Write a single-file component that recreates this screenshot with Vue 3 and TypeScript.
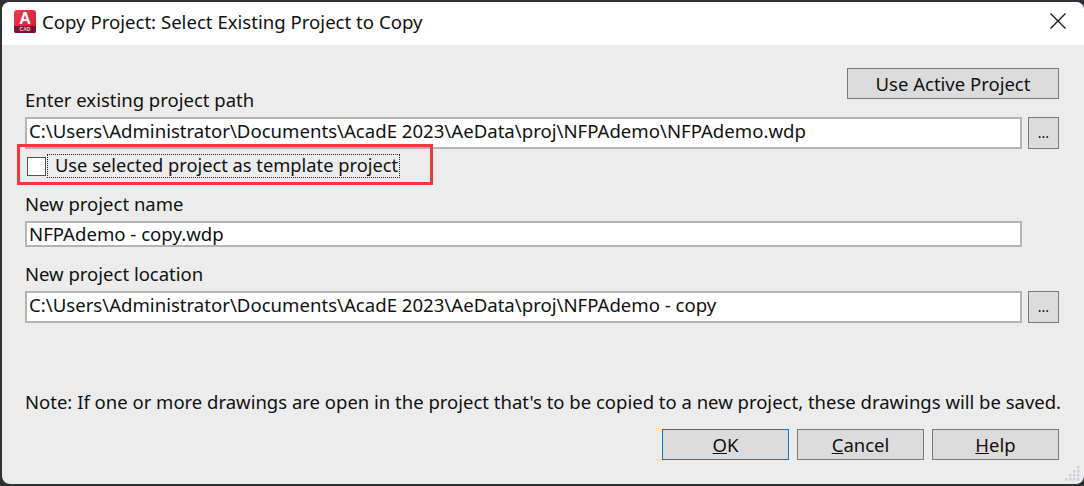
<script setup lang="ts">
const projectPath = 'C:\\Users\\Administrator\\Documents\\AcadE 2023\\AeData\\proj\\NFPAdemo\\NFPAdemo.wdp'
const locationPath = 'C:\\Users\\Administrator\\Documents\\AcadE 2023\\AeData\\proj\\NFPAdemo - copy'

// resize grip: staircase of dots, widest on the bottom row
const gripDots: { x: number; y: number }[] = []
for (let row = 0; row < 4; row++) {
  for (let col = 3 - row; col < 4; col++) {
    gripDots.push({ x: col * 4 + 1, y: row * 4 + 1 })
  }
}
</script>

<template>
  <div class="window">
    <div class="titlebar">
      <div class="app-icon">
        <span class="app-letter">A</span>
        <span class="app-band">CAD</span>
      </div>
      <div class="title">Copy Project: Select Existing Project to Copy</div>
      <svg class="close" width="16" height="16" viewBox="0 0 16 16">
        <path d="M0.5 0.5 L15.5 15.5 M15.5 0.5 L0.5 15.5" stroke="#111" stroke-width="1.2" fill="none" />
      </svg>
    </div>

    <div class="body">
      <div class="top-actions">
        <button class="btn btn-active">Use Active Project</button>
      </div>
      <div class="label first-label">Enter existing project path</div>
      <div class="field-row">
        <div class="input tall">{{ projectPath }}</div>
        <button class="btn btn-browse"><span>...</span></button>
      </div>

      <div class="check-row">
        <span class="checkbox"></span>
        <span class="check-label">Use selected project as template project</span>
        <div class="highlight"></div>
      </div>

      <div class="label name-label">New project name</div>
      <div class="field-row">
        <div class="input short">NFPAdemo - copy.wdp</div>
      </div>

      <div class="label location-label">New project location</div>
      <div class="field-row">
        <div class="input tall">{{ locationPath }}</div>
        <button class="btn btn-browse"><span>...</span></button>
      </div>

      <div class="note">Note: If one or more drawings are open in the project that's to be copied to a new project, these drawings will be saved.</div>

      <div class="footer">
        <button class="btn btn-footer btn-default"><u>O</u>K</button>
        <button class="btn btn-footer"><u>C</u>ancel</button>
        <button class="btn btn-footer"><u>H</u>elp</button>
      </div>

      <svg class="grip" width="18" height="18" viewBox="0 0 18 18">
        <rect v-for="(dot, i) in gripDots" :key="i" :x="dot.x" :y="dot.y" width="2.5" height="2.5" fill="#ccd0d8" />
      </svg>
    </div>
  </div>
</template>

<style>
html,
body {
  margin: 0;
  background: #2e3238;
}
</style>

<style scoped>
.window {
  box-sizing: border-box;
  width: 1082px;
  height: 482px;
  margin: 2px 0 0 2px;
  border-radius: 8px;
  overflow: hidden;
  display: flex;
  flex-direction: column;
  background: #ececec;
  font-family: "Noto Sans", "Open Sans", sans-serif;
  font-size: 18.5px;
  color: #111;
}
.titlebar {
  box-sizing: border-box;
  height: 43px;
  flex-shrink: 0;
  background: #fff;
  display: flex;
  align-items: center;
  padding: 0 18px 5px 12px;
}
.app-icon {
  width: 22px;
  height: 23px;
  border-radius: 3px 3px 2px 2px;
  background: linear-gradient(135deg, #ef3a50, #d3183a);
  position: relative;
  overflow: hidden;
  flex-shrink: 0;
}
.app-letter {
  position: absolute;
  left: 0;
  right: 0;
  top: 0;
  text-align: center;
  color: #fff;
  font-family: "Liberation Sans", sans-serif;
  font-size: 16px;
  font-weight: 700;
  line-height: 17px;
}
.app-band {
  position: absolute;
  left: 0;
  right: 0;
  bottom: 0;
  height: 7px;
  background: #7c1430;
  color: #f3ccd3;
  text-align: center;
  font-family: "Liberation Sans", sans-serif;
  font-size: 5px;
  font-weight: 700;
  line-height: 7px;
}
.title {
  flex: 1;
  margin-left: 6px;
  font-size: 18.6px;
  white-space: nowrap;
}
.body {
  flex: 1;
  position: relative;
  display: flex;
  flex-direction: column;
  padding: 23px 23px 0 23px;
}
.top-actions {
  display: flex;
  justify-content: flex-end;
  height: 32px;
  margin-right: 2px;
}
.btn {
  box-sizing: border-box;
  margin: 0;
  padding: 0;
  background: #dcdcdc;
  border: 1px solid #7a7a7a;
  font: inherit;
  color: #111;
}
.btn-active {
  width: 212px;
  height: 31px;
}
.label {
  height: 24px;
  line-height: 24px;
  white-space: nowrap;
}
.first-label {
  margin-top: -12px;
}
.field-row {
  display: flex;
  gap: 6px;
  margin-top: 5px;
}
.input {
  box-sizing: border-box;
  width: 997px;
  border: 2px solid #b4b4b8;
  background: #fff;
  padding-left: 2px;
  font-size: 18.6px;
  white-space: nowrap;
  overflow: hidden;
}
.tall {
  height: 32px;
  line-height: 24px;
}
.short {
  height: 26px;
  line-height: 22px;
}
.btn-browse {
  width: 31px;
  height: 32px;
  line-height: 30px;
  font-size: 14px;
}
.check-row {
  position: relative;
  display: flex;
  align-items: center;
  height: 24px;
  margin-top: 5px;
  margin-left: 2px;
}
.checkbox {
  box-sizing: border-box;
  width: 19px;
  height: 19px;
  background: #fff;
  border: 1px solid #555;
}
.check-label {
  box-sizing: border-box;
  height: 24px;
  line-height: 20px;
  padding: 0 0 0 7px;
  margin-left: 1px;
  width: 353px;
  font-size: 18.3px;
  white-space: nowrap;
  border: 1px dotted #222;
}
.highlight {
  position: absolute;
  left: -10px;
  top: -10px;
  width: 416px;
  height: 41px;
  box-sizing: border-box;
  border: 3px solid #f03a3e;
  pointer-events: none;
}
.name-label {
  margin-top: 14px;
}
.location-label {
  margin-top: 15px;
}
.note {
  margin-top: 67px;
  height: 24px;
  line-height: 24px;
  white-space: nowrap;
}
.footer {
  display: flex;
  justify-content: flex-end;
  gap: 8px;
  margin-top: 15px;
  margin-right: 2px;
}
.btn-footer {
  width: 127px;
  height: 31px;
}
.btn-default {
  border-color: #0a78d7;
}
.grip {
  position: absolute;
  right: 2px;
  bottom: 1px;
}
.close {
  flex-shrink: 0;
}
</style>
